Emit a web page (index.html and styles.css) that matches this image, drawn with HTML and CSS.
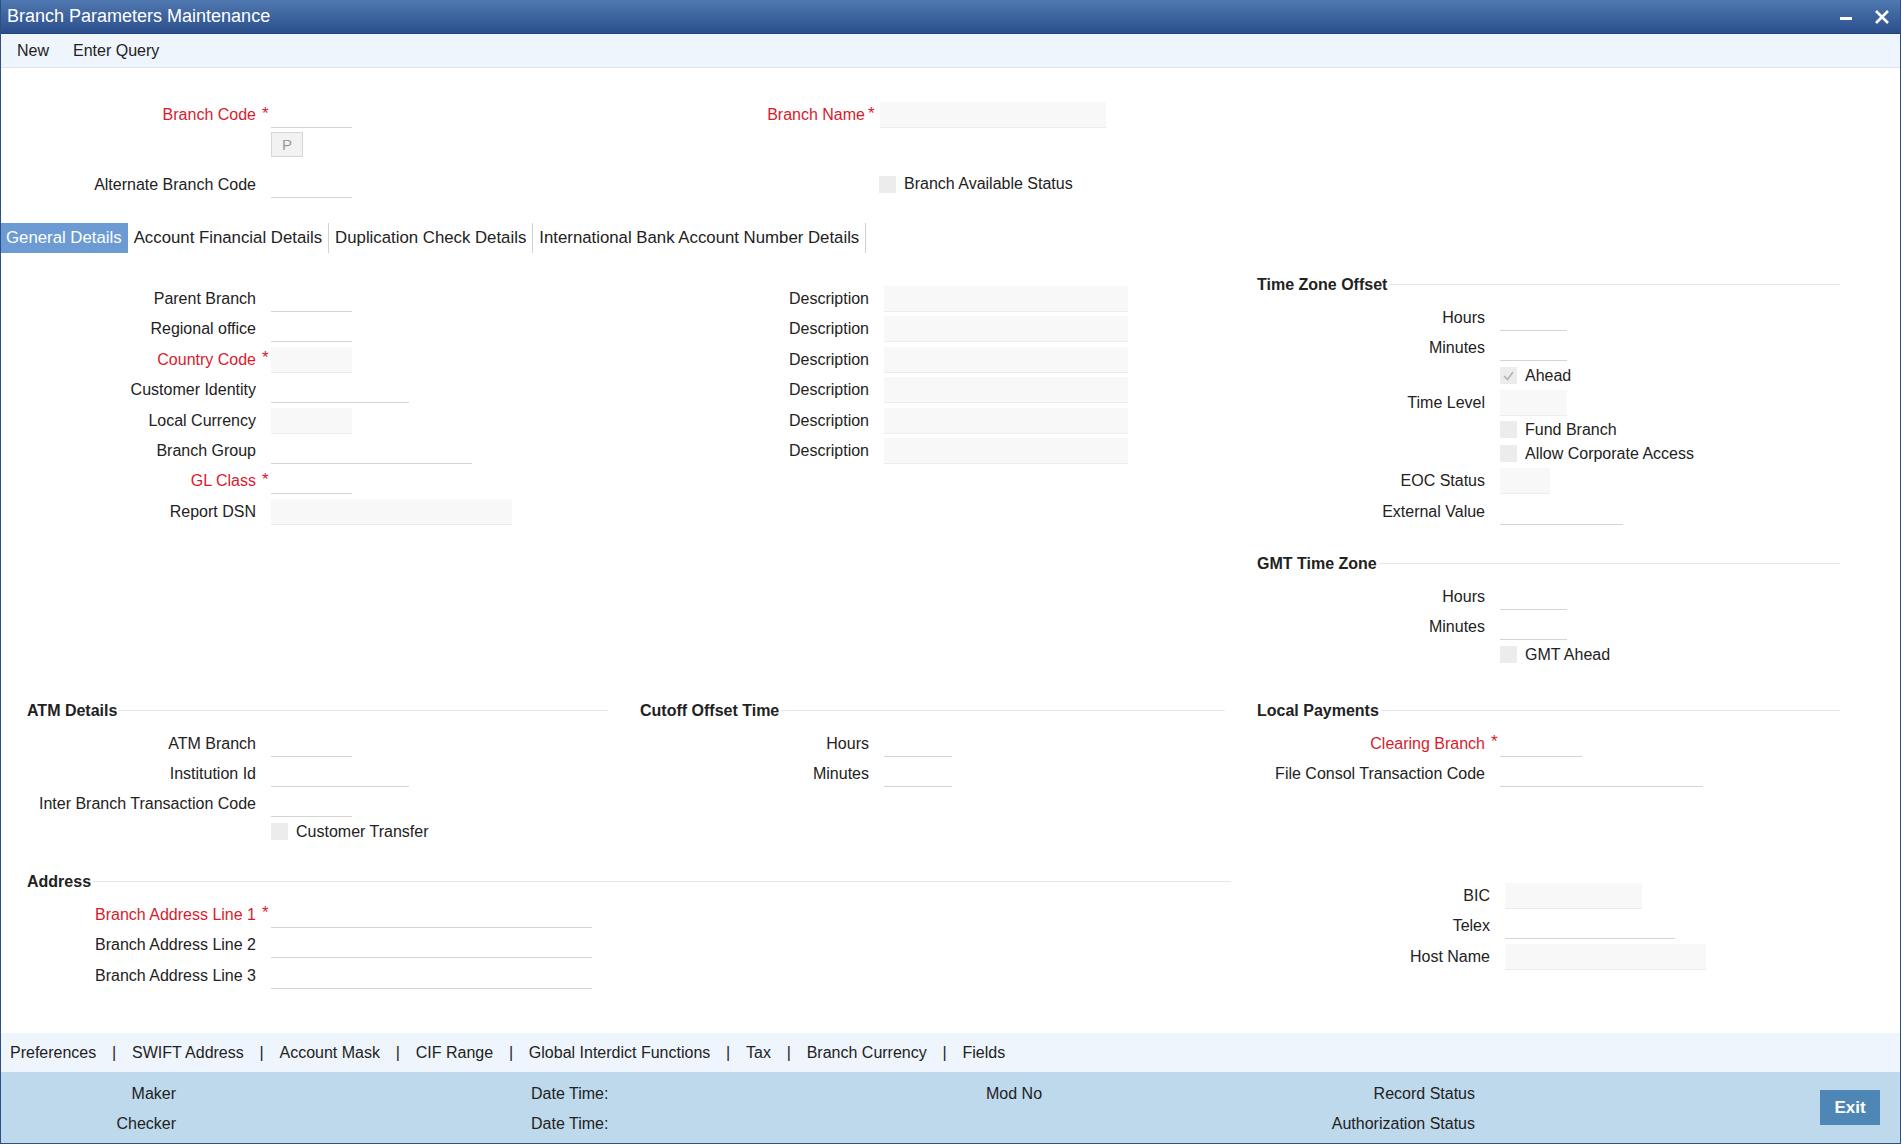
FILE: index.html
```html
<!DOCTYPE html>
<html lang="en">
<head>
<meta charset="utf-8">
<title>Branch Parameters Maintenance</title>
<link rel="stylesheet" href="styles.css">
</head>
<body>
<div class="window">
  <div class="titlebar">
    <span class="title">Branch Parameters Maintenance</span>
    <div class="winctl">
      <svg class="ico-min" width="14" height="14" viewBox="0 0 14 14"><rect x="1" y="6" width="12" height="3" fill="#fff"/></svg>
      <svg class="ico-close" width="16" height="16" viewBox="0 0 16 16"><path d="M2 2 L14 14 M14 2 L2 14" stroke="#fff" stroke-width="2.6" fill="none"/></svg>
    </div>
  </div>
  <div class="toolbar">
    <span class="tool">New</span>
    <span class="tool">Enter Query</span>
  </div>

  <div class="content">
    <div class="head">
      <div class="head-left">
        <div class="row">
          <span class="lbl req">Branch Code</span><span class="mark">*</span>
          <span class="inp line w81"></span>
        </div>
        <div class="prow"><span class="pbtn">P</span></div>
        <div class="row alt">
          <span class="lbl">Alternate Branch Code</span><span class="mark"></span>
          <span class="inp line w81"></span>
        </div>
      </div>
      <div class="head-mid">
        <div class="row">
          <span class="lbl req lbl-bn">Branch Name</span><span class="mark mark-bn">*</span>
          <span class="inp fill w226"></span>
        </div>
        <div class="row chk-row bas">
          <span class="spacer-bn"></span>
          <span class="cb"></span><span class="cbl">Branch Available Status</span>
        </div>
      </div>
    </div>

    <div class="tabs">
      <span class="tab active">General Details</span>
      <span class="tab">Account Financial Details</span>
      <span class="tab">Duplication Check Details</span>
      <span class="tab">International Bank Account Number Details</span>
    </div>

    <div class="panel">
      <div class="col c1 r1">
        <div class="row"><span class="lbl">Parent Branch</span><span class="mark"></span><span class="inp line w81"></span></div>
        <div class="row"><span class="lbl">Regional office</span><span class="mark"></span><span class="inp line w81"></span></div>
        <div class="row"><span class="lbl req">Country Code</span><span class="mark">*</span><span class="inp fill w81"></span></div>
        <div class="row"><span class="lbl">Customer Identity</span><span class="mark"></span><span class="inp line w138"></span></div>
        <div class="row"><span class="lbl">Local Currency</span><span class="mark"></span><span class="inp fill w81"></span></div>
        <div class="row"><span class="lbl">Branch Group</span><span class="mark"></span><span class="inp line w201"></span></div>
        <div class="row"><span class="lbl req">GL Class</span><span class="mark">*</span><span class="inp line w81"></span></div>
        <div class="row"><span class="lbl">Report DSN</span><span class="mark"></span><span class="inp fill w241"></span></div>
      </div>
      <div class="col c2 r1">
        <div class="row"><span class="lbl">Description</span><span class="mark"></span><span class="inp fill w244"></span></div>
        <div class="row"><span class="lbl">Description</span><span class="mark"></span><span class="inp fill w244"></span></div>
        <div class="row"><span class="lbl">Description</span><span class="mark"></span><span class="inp fill w244"></span></div>
        <div class="row"><span class="lbl">Description</span><span class="mark"></span><span class="inp fill w244"></span></div>
        <div class="row"><span class="lbl">Description</span><span class="mark"></span><span class="inp fill w244"></span></div>
        <div class="row"><span class="lbl">Description</span><span class="mark"></span><span class="inp fill w244"></span></div>
      </div>
      <div class="col c3 r1 rcol">
        <div class="sec"><span class="sec-t">Time Zone Offset</span><span class="sec-l"></span></div>
        <div class="row"><span class="lbl rl">Hours</span><span class="mark"></span><span class="inp line w67"></span></div>
        <div class="row"><span class="lbl rl">Minutes</span><span class="mark"></span><span class="inp line w67"></span></div>
        <div class="row chk-row"><span class="lbl rl"></span><span class="mark"></span><span class="cb on"><svg width="17" height="17" viewBox="0 0 17 17"><path d="M4 9 L7.5 12.5 L13 5" stroke="#b3b3b3" stroke-width="1.6" fill="none"/></svg></span><span class="cbl">Ahead</span></div>
        <div class="row"><span class="lbl rl">Time Level</span><span class="mark"></span><span class="inp fill w67"></span></div>
        <div class="row chk-row"><span class="lbl rl"></span><span class="mark"></span><span class="cb"></span><span class="cbl">Fund Branch</span></div>
        <div class="row chk-row"><span class="lbl rl"></span><span class="mark"></span><span class="cb"></span><span class="cbl">Allow Corporate Access</span></div>
        <div class="row"><span class="lbl rl">EOC Status</span><span class="mark"></span><span class="inp fill w50"></span></div>
        <div class="row"><span class="lbl rl">External Value</span><span class="mark"></span><span class="inp line w123"></span></div>

        <div class="sec sec-gmt"><span class="sec-t">GMT Time Zone</span><span class="sec-l"></span></div>
        <div class="row"><span class="lbl rl">Hours</span><span class="mark"></span><span class="inp line w67"></span></div>
        <div class="row"><span class="lbl rl">Minutes</span><span class="mark"></span><span class="inp line w67"></span></div>
        <div class="row chk-row"><span class="lbl rl"></span><span class="mark"></span><span class="cb"></span><span class="cbl">GMT Ahead</span></div>
      </div>

      <div class="col c1 r2">
        <div class="sec"><span class="sec-t">ATM Details</span><span class="sec-l"></span></div>
        <div class="row"><span class="lbl">ATM Branch</span><span class="mark"></span><span class="inp line w81"></span></div>
        <div class="row"><span class="lbl">Institution Id</span><span class="mark"></span><span class="inp line w138"></span></div>
        <div class="row"><span class="lbl">Inter Branch Transaction Code</span><span class="mark"></span><span class="inp line w81"></span></div>
        <div class="row chk-row"><span class="lbl"></span><span class="mark"></span><span class="cb"></span><span class="cbl">Customer Transfer</span></div>
      </div>
      <div class="col c2 r2">
        <div class="sec"><span class="sec-t">Cutoff Offset Time</span><span class="sec-l"></span></div>
        <div class="row"><span class="lbl">Hours</span><span class="mark"></span><span class="inp line w68"></span></div>
        <div class="row"><span class="lbl">Minutes</span><span class="mark"></span><span class="inp line w68"></span></div>
      </div>
      <div class="col c3 r2 rcol">
        <div class="sec"><span class="sec-t">Local Payments</span><span class="sec-l"></span></div>
        <div class="row"><span class="lbl rl req">Clearing Branch</span><span class="mark">*</span><span class="inp line w82"></span></div>
        <div class="row"><span class="lbl rl">File Consol Transaction Code</span><span class="mark"></span><span class="inp line w203"></span></div>
      </div>

      <div class="col c12 r3">
        <div class="sec sec-addr"><span class="sec-t">Address</span><span class="sec-l"></span></div>
        <div class="row"><span class="lbl req">Branch Address Line 1</span><span class="mark">*</span><span class="inp line w321"></span></div>
        <div class="row"><span class="lbl">Branch Address Line 2</span><span class="mark"></span><span class="inp line w321"></span></div>
        <div class="row"><span class="lbl">Branch Address Line 3</span><span class="mark"></span><span class="inp line w321"></span></div>
      </div>
      <div class="col c3 r3 bic">
        <div class="row"><span class="lbl bl">BIC</span><span class="mark"></span><span class="inp fill w137"></span></div>
        <div class="row"><span class="lbl bl">Telex</span><span class="mark"></span><span class="inp line w170"></span></div>
        <div class="row"><span class="lbl bl">Host Name</span><span class="mark"></span><span class="inp fill w201"></span></div>
      </div>
    </div>
  </div>

  <div class="linkbar">
    <span class="lk">Preferences</span><span class="sep">|</span>
    <span class="lk">SWIFT Address</span><span class="sep">|</span>
    <span class="lk">Account Mask</span><span class="sep">|</span>
    <span class="lk">CIF Range</span><span class="sep">|</span>
    <span class="lk">Global Interdict Functions</span><span class="sep">|</span>
    <span class="lk">Tax</span><span class="sep">|</span>
    <span class="lk">Branch Currency</span><span class="sep">|</span>
    <span class="lk">Fields</span>
  </div>

  <div class="footer">
    <div class="audit">
      <span class="a-lbl">Maker</span><span></span><span class="a-dt">Date Time:</span><span class="a-mod">Mod No</span><span class="a-st">Record Status</span>
      <span class="a-lbl">Checker</span><span></span><span class="a-dt">Date Time:</span><span class="a-mod"></span><span class="a-st">Authorization Status</span>
    </div>
    <span class="exit">Exit</span>
  </div>
</div>
</body>
</html>
```

FILE: styles.css
```css
* { box-sizing: border-box; }
html, body { margin: 0; padding: 0; background: #fff; }
body {
  font-family: "Liberation Sans", Arial, sans-serif;
  font-size: 16px;
  color: #222;
}
.window {
  width: 1901px;
  height: 1144px;
  display: flex;
  flex-direction: column;
  border-left: 1px solid #2b4f86;
  border-right: 1px solid #2b4f86;
  border-bottom: 1px solid #2b4f86;
}
.titlebar {
  height: 34px;
  flex: none;
  display: flex;
  align-items: center;
  justify-content: space-between;
  padding: 0 10px 0 6px;
  background: linear-gradient(#5078b0, #2b4f8c);
  border-bottom: 1px solid #23457c;
}
.title { color: #fff; font-size: 18px; }
.winctl { display: flex; align-items: center; gap: 21px; }
.ico-min { margin-top: 2px; }
.toolbar {
  height: 34px;
  flex: none;
  display: flex;
  align-items: center;
  padding-left: 4px;
  background: #eef5fd;
  border-bottom: 1px solid #dde5ef;
}
.tool { padding: 0 12px; }
.content { flex: 1; display: flex; flex-direction: column; }

.head { display: flex; padding-top: 32px; }
.head-left { width: 639px; padding-left: 26px; }
.row { display: flex; align-items: center; height: 30.4px; }
.lbl { width: 229px; text-align: right; white-space: nowrap; flex: none; }
.lbl.req { color: #d81b2c; }
.mark { width: 15px; flex: none; color: #d81b2c; padding-left: 6px; font-size: 17px; margin-top: -3px; }
.lbl-bn { width: 225px; }
.mark-bn { padding-left: 3px; }
.spacer-bn { width: 239px; flex: none; }
.inp { height: 26px; flex: none; display: block; }
.inp.line { border-bottom: 1px solid #d4d4d4; }
.inp.fill { background: #f8f8f8; border-bottom: 1px solid #ececec; }
.w50 { width: 50px; } .w67 { width: 67px; } .w68 { width: 68px; }
.w81 { width: 81px; } .w82 { width: 82px; } .w123 { width: 123px; }
.w137 { width: 137px; } .w138 { width: 138px; } .w170 { width: 170px; }
.w201 { width: 201px; } .w203 { width: 203px; } .w226 { width: 226px; }
.w241 { width: 241px; } .w244 { width: 244px; } .w321 { width: 321px; }

.prow { height: 25px; margin-top: 2px; padding-left: 244px; }
.pbtn {
  display: inline-flex; align-items: center; justify-content: center;
  width: 32px; height: 25px;
  background: #f2f2f2; border: 1px solid #d6d6d6;
  color: #9a9a9a; font-size: 15px;
}
.row.alt { margin-top: 12px; }
.row.bas { margin-top: 42px; }

.chk-row { height: 24px; }
.cb {
  width: 17px; height: 17px; flex: none;
  background: #ececec; display: block;
}
.cb svg { display: block; }
.cbl { margin-left: 8px; white-space: nowrap; }

.tabs { display: flex; height: 30px; margin-top: 23px; }
.tab {
  display: flex; align-items: center;
  padding: 0 6px;
  border-right: 1px solid #d2d2d2;
  white-space: nowrap;
  font-size: 16.8px;
}
.tab.active { background: #6c9bd3; color: #fff; padding: 0 6px 0 5px; border-right: none; }

.panel {
  display: grid;
  grid-template-columns: 581px 585px 583px;
  column-gap: 32px;
  padding-left: 26px;
  align-items: start;
}
.c1 { grid-column: 1; }
.c2 { grid-column: 2; }
.c3 { grid-column: 3; }
.c12 { grid-column: 1 / span 2; }
.r1 { grid-row: 1; }
.r2 { grid-row: 2; margin-top: 32px; }
.r3 { grid-row: 3; margin-top: 26px; }
.c1.r1, .c2.r1 { padding-top: 31px; }
.rcol.r1 { padding-top: 20px; }
.rcol .lbl.rl { width: 228px; }
.bic { padding-top: 11px; }
.bic .lbl.bl { width: 233px; }

.sec { display: flex; align-items: center; height: 24px; margin-bottom: 6px; }
.sec-t { font-weight: bold; white-space: nowrap; }
.sec-l { flex: 1; border-top: 1px solid #e6e6e6; margin-left: 2px; }
.sec-gmt { margin-top: 25px; }
.sec-addr { margin-right: -6px; }

.linkbar {
  height: 39px; flex: none;
  display: flex; align-items: center;
  padding-left: 9px;
  background: #eef5fd;
}
.sep { margin: 0 15.8px; }

.footer {
  height: 71px; flex: none;
  display: flex; align-items: center;
  background: #bed8ec;
  padding-right: 20px;
}
.audit {
  display: grid;
  grid-template-columns: 175px 355px 455px 189px 300px;
  grid-auto-rows: 30px;
  align-items: center;
  padding-top: 2px;
}
.a-lbl { text-align: right; }
.a-st { text-align: right; white-space: nowrap; }
.exit {
  margin-left: auto;
  width: 60px; height: 35px;
  display: flex; align-items: center; justify-content: center;
  background: #4e86b6; color: #fff; font-weight: bold; font-size: 17px;
}
```
